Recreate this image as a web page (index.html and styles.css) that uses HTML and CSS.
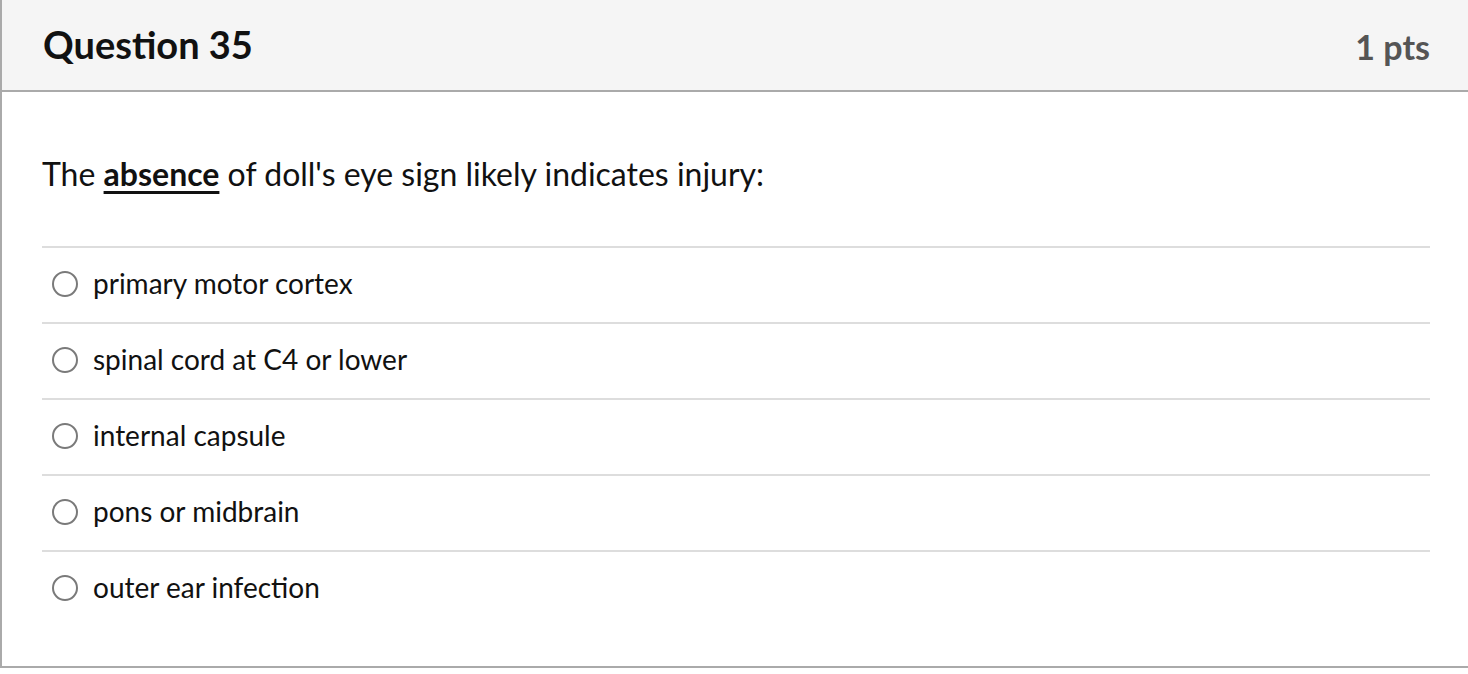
FILE: index.html
```html
<!DOCTYPE html>
<html>
<head>
<meta charset="utf-8">
<link rel="stylesheet" href="styles.css">
</head>
<body>
<div class="question">
  <div class="header">
    <h2 class="title">Question 35</h2>
    <span class="pts">1 pts</span>
  </div>
  <div class="content">
    <p class="text">The <strong class="u">absence</strong> of doll's eye sign likely indicates injury:</p>
    <div class="answers">
      <label class="answer"><span class="radio"></span><span>primary motor cortex</span></label>
      <label class="answer"><span class="radio"></span><span>spinal cord at C4 or lower</span></label>
      <label class="answer"><span class="radio"></span><span>internal capsule</span></label>
      <label class="answer"><span class="radio"></span><span>pons or midbrain</span></label>
      <label class="answer"><span class="radio"></span><span>outer ear infection</span></label>
    </div>
  </div>
</div>
</body>
</html>
```
FILE: styles.css
```css
html, body {
  margin: 0;
  padding: 0;
  background: #fff;
}
body {
  font-family: Lato, "Open Sans", sans-serif;
  color: #111;
  overflow: hidden;
}
.question {
  border-left: 2px solid #aaaaaa;
  border-bottom: 2px solid #aaaaaa;
  width: 1480px;
  box-sizing: border-box;
}
.header {
  height: 92px;
  background: #f5f5f5;
  border-bottom: 2px solid #aaaaaa;
  display: flex;
  align-items: center;
  justify-content: space-between;
  padding: 0 38px 0 41px;
  width: 1466px;
  box-sizing: border-box;
}
.title {
  margin: 0;
  font-size: 38px;
  font-weight: 700;
  color: #111;
  padding-bottom: 2px;
}
.pts {
  font-size: 34px;
  font-weight: 700;
  color: #555;
  padding-top: 2px;
}
.content {
  padding: 0 0 40px 40px;
  width: 1428px;
  box-sizing: border-box;
}
.text {
  margin: 0;
  height: 154px;
  line-height: 38px;
  padding-top: 63px;
  font-size: 32px;
  box-sizing: border-box;
}
.u {
  text-decoration: underline;
  text-underline-offset: 5px;
  text-decoration-thickness: 3px;
}
.answers {
  display: flex;
  flex-direction: column;
}
.answer {
  height: 76px;
  border-top: 2px solid #dddddd;
  display: flex;
  align-items: center;
  font-size: 28px;
  box-sizing: border-box;
  gap: 15px;
  padding-left: 10px;
  padding-bottom: 5px;
}
.radio {
  width: 26px;
  height: 26px;
  border: 2px solid #7a7a7a;
  border-radius: 50%;
  box-sizing: border-box;
  flex: none;
  margin-top: 3px;
}
```
